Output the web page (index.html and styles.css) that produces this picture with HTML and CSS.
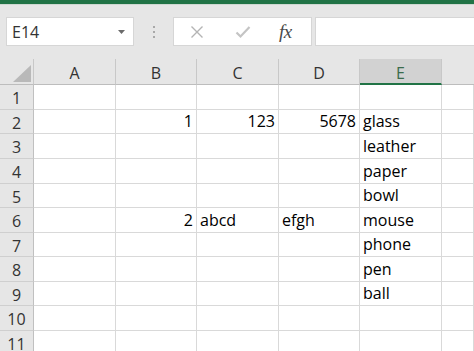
FILE: index.html
```html
<!DOCTYPE html>
<html>
<head>
<meta charset="utf-8">
<link rel="stylesheet" href="styles.css">
</head>
<body>
<div class="titlebar"></div>
<div class="formulabar">
  <div class="namebox">
    <span class="name">E14</span>
    <svg class="caret" width="7" height="4" viewBox="0 0 7 4"><path d="M0 0 L7 0 L3.5 4 Z" fill="#6a6a6a"/></svg>
  </div>
  <div class="grip"><i></i><i></i><i></i></div>
  <div class="fxbox">
    <svg class="icon" width="14" height="14" viewBox="0 0 14 14"><path d="M1.5 1.5 L12.5 12.5 M12.5 1.5 L1.5 12.5" stroke="#b4b4b4" stroke-width="1.4" fill="none"/></svg>
    <svg class="icon" width="16" height="14" viewBox="0 0 16 14"><path d="M1.5 7.5 L5.5 11.5 L14.5 2" stroke="#c4c4c4" stroke-width="2.2" fill="none"/></svg>
    <span class="fx">fx</span>
  </div>
  <div class="input"></div>
</div>
<div class="sheet">
  <div class="corner"><svg width="18" height="17" viewBox="0 0 18 17"><path d="M18 0 L18 17 L0 17 Z" fill="#b9b9b9"/></svg></div>
  <div class="colhead">A</div>
  <div class="colhead">B</div>
  <div class="colhead">C</div>
  <div class="colhead">D</div>
  <div class="colhead active">E</div>
  <div class="colhead last"></div>

  <div class="rowhead">1</div><div class="cell"></div><div class="cell"></div><div class="cell"></div><div class="cell"></div><div class="cell"></div><div class="cell"></div>
  <div class="rowhead">2</div><div class="cell"></div><div class="cell num">1</div><div class="cell num">123</div><div class="cell num">5678</div><div class="cell">glass</div><div class="cell"></div>
  <div class="rowhead">3</div><div class="cell"></div><div class="cell"></div><div class="cell"></div><div class="cell"></div><div class="cell">leather</div><div class="cell"></div>
  <div class="rowhead">4</div><div class="cell"></div><div class="cell"></div><div class="cell"></div><div class="cell"></div><div class="cell">paper</div><div class="cell"></div>
  <div class="rowhead">5</div><div class="cell"></div><div class="cell"></div><div class="cell"></div><div class="cell"></div><div class="cell">bowl</div><div class="cell"></div>
  <div class="rowhead">6</div><div class="cell"></div><div class="cell num">2</div><div class="cell">abcd</div><div class="cell">efgh</div><div class="cell">mouse</div><div class="cell"></div>
  <div class="rowhead">7</div><div class="cell"></div><div class="cell"></div><div class="cell"></div><div class="cell"></div><div class="cell">phone</div><div class="cell"></div>
  <div class="rowhead">8</div><div class="cell"></div><div class="cell"></div><div class="cell"></div><div class="cell"></div><div class="cell">pen</div><div class="cell"></div>
  <div class="rowhead">9</div><div class="cell"></div><div class="cell"></div><div class="cell"></div><div class="cell"></div><div class="cell">ball</div><div class="cell"></div>
  <div class="rowhead">10</div><div class="cell"></div><div class="cell"></div><div class="cell"></div><div class="cell"></div><div class="cell"></div><div class="cell"></div>
  <div class="rowhead">11</div><div class="cell"></div><div class="cell"></div><div class="cell"></div><div class="cell"></div><div class="cell"></div><div class="cell"></div>
</div>
</body>
</html>
```
FILE: styles.css
```css
* { box-sizing: border-box; }
html, body { margin: 0; padding: 0; }
body {
  width: 474px;
  height: 351px;
  overflow: hidden;
  background: #e6e6e6;
  font-family: "Open Sans", "Liberation Sans", sans-serif;
}
.titlebar {
  height: 5px;
  background: #217346;
  border-bottom: 1px solid #cfd8d2;
}
.formulabar {
  height: 54px;
  display: flex;
  align-items: flex-start;
  padding-top: 12px;
  padding-left: 6px;
}
.namebox {
  width: 128px;
  height: 29px;
  background: #fff;
  border: 1px solid #d6d6d6;
  display: flex;
  align-items: center;
  justify-content: space-between;
  padding: 0 8px 0 5px;
}
.name {
  font-size: 16px;
  color: #333;
}
.caret { margin-top: 1px; }
.grip {
  width: 39px;
  height: 29px;
  display: flex;
  flex-direction: column;
  align-items: center;
  justify-content: center;
  gap: 3px;
}
.grip i {
  display: block;
  width: 2px;
  height: 2px;
  background: #a8a8a8;
}
.fxbox {
  width: 139px;
  height: 29px;
  background: #fff;
  border: 1px solid #d6d6d6;
  display: flex;
  align-items: center;
  padding-left: 16px;
}
.fxbox .icon:nth-child(2) { margin-left: 31px; }
.fx {
  margin-left: 28px;
  font-family: "Liberation Serif", serif;
  font-style: italic;
  font-size: 19px;
  color: #4a4a4a;
  letter-spacing: -0.5px;
}
.input {
  flex: 1;
  height: 29px;
  margin-left: 3px;
  background: #fff;
  border: 1px solid #d6d6d6;
  border-right: none;
}
.sheet {
  display: grid;
  grid-template-columns: 34px 82px 81px 82px 81px 82px 1fr;
  grid-template-rows: 26px 25px 24px 25px 25px 24px 25px 24px 25px 24px 25px 25px;
  background: #fff;
}
.corner {
  background: #e6e6e6;
  border-right: 1px solid #c8c8c8;
  border-bottom: 1px solid #bdbdbd;
  display: flex;
  align-items: flex-end;
  justify-content: flex-end;
  padding: 0 2px 2px 0;
}
.colhead {
  background: #e6e6e6;
  border-right: 1px solid #c8c8c8;
  border-bottom: 1px solid #bdbdbd;
  display: flex;
  align-items: center;
  justify-content: center;
  font-size: 16px;
  color: #333;
  padding-top: 2px;
}
.colhead.last { border-right: none; }
.colhead.active {
  background: #d2d2d2;
  color: #3b6b4c;
  border-bottom: 2px solid #217346;
  padding-top: 3px;
}
.rowhead {
  background: #e6e6e6;
  border-right: 1px solid #c0c0c0;
  border-bottom: 1px solid #cfcfcf;
  display: flex;
  align-items: center;
  justify-content: center;
  font-size: 16px;
  color: #333;
  padding-top: 2px;
}
.cell {
  border-right: 1px solid #d9d9d9;
  border-bottom: 1px solid #d9d9d9;
  display: flex;
  align-items: flex-end;
  padding: 0 3px 1px 3px;
  font-size: 16px;
  line-height: 22px;
  color: #000;
  white-space: nowrap;
}
.cell.num { justify-content: flex-end; }
```
